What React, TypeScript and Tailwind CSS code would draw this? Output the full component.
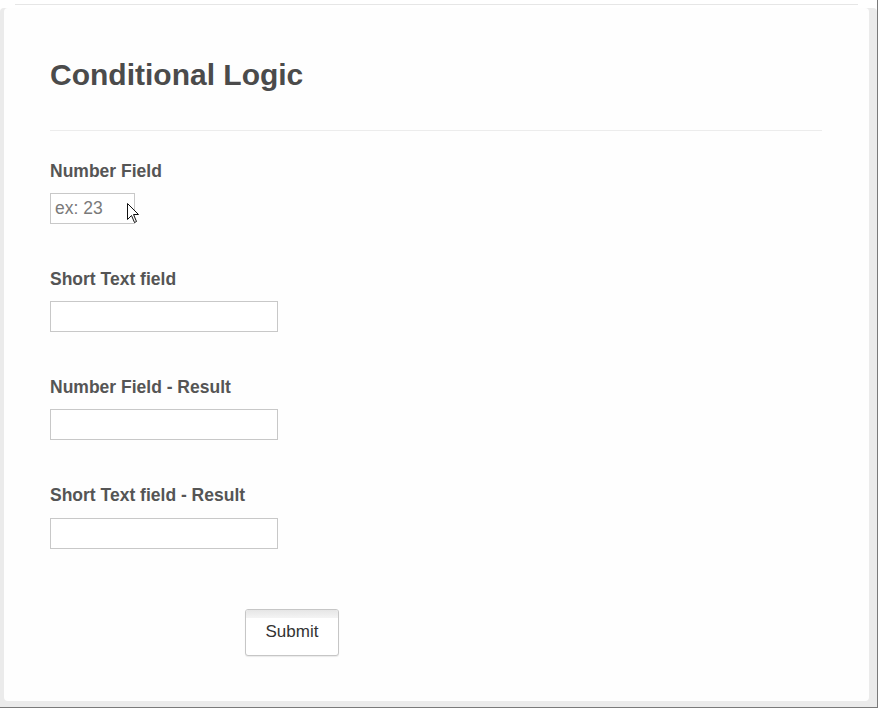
const font = { fontFamily: '"Liberation Sans", Arial, sans-serif' };

const Field = ({ label, gap, inputGap = "mt-[12px]", narrow, placeholder }: { label: string; gap: string; inputGap?: string; narrow?: boolean; placeholder?: string }) => (
    <div className={gap}>
        <label className="block text-[17.5px] leading-[20px] font-bold text-[#555555]">{label}</label>
        <input
            type="text"
            placeholder={placeholder}
            className={`${inputGap} block h-[31px] border border-[#c8c8c8] bg-white px-[4px] text-[17.5px] text-[#555] outline-none placeholder:text-[#7a7a7a] ${narrow ? "w-[85px]" : "w-[228px]"}`}
        />
    </div>
);

export default function App() {
    return (
        <div className="w-[878px] h-[708px] bg-white border-r border-b border-[#7a7a7a] flex flex-col" style={font}>
            <div className="h-[8px] pl-[15px] pt-[4px]">
                <div className="h-px w-[843px] bg-[#e6e6e6]" />
            </div>
            <div className="flex-1 flex bg-[#ebebeb] pl-[4px] pr-[8px] pb-[6px] rounded-t-[4px]">
                <div className="relative flex-1 bg-[#fefefe] rounded-[4px] pl-[46px] pr-[47px] pt-[49px]">
                    <h1 className="text-[30px] leading-[36px] font-bold text-[#4b4b4b]">Conditional Logic</h1>
                    <div className="mt-[37px] h-px bg-[#ececec]" />

                    <Field label="Number Field" gap="mt-[30px]" narrow placeholder="ex: 23" />
                    <Field label="Short Text field" gap="mt-[45px]" />
                    <Field label="Number Field - Result" gap="mt-[45px]" />
                    <Field label="Short Text field - Result" gap="mt-[45px]" inputGap="mt-[13px]" />

                    <div className="mt-[60px] pl-[195px]">
                        <button className="relative w-[94px] h-[47px] rounded-[3px] border border-[#c6c6c6] bg-white text-[17px] text-[#333] shadow-[0_1px_1px_rgba(0,0,0,0.08)] overflow-hidden">
                            <span className="absolute left-0 right-0 top-0 h-[8px] bg-gradient-to-b from-[#e6e6e6] to-[#f4f4f4]" />
                            <span className="relative -top-px">Submit</span>
                        </button>
                    </div>

                    <svg className="absolute left-[123px] top-[195px]" width="13" height="21" viewBox="0 0 13 21">
                        <path d="M0.5 0.5 L0.5 16.5 L4.5 12.5 L7.5 19.5 L9.5 18.5 L6.5 11.5 L11.5 11.5 Z" fill="#fff" stroke="#111" strokeWidth="1" strokeLinejoin="miter" />
                    </svg>
                </div>
            </div>
        </div>
    );
}
